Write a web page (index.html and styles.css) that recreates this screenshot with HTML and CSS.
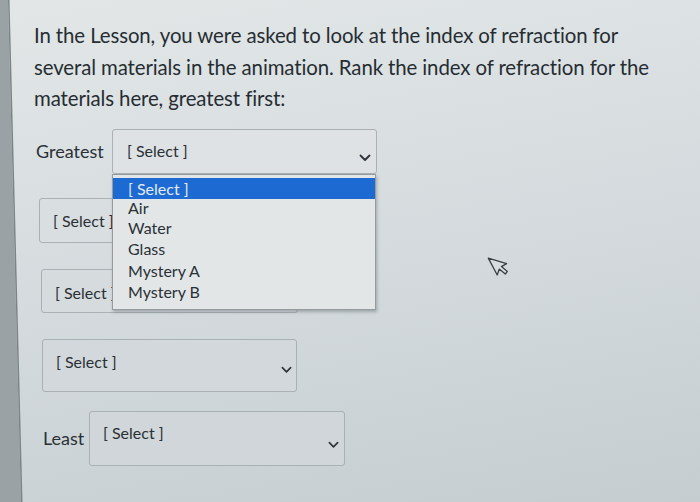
FILE: index.html
```html
<!DOCTYPE html>
<html lang="en">
<head>
<meta charset="utf-8">
<title>Rank the index of refraction</title>
<link rel="stylesheet" href="styles.css">
</head>
<body>
<div class="page">
  <p class="question">In the Lesson, you were asked to look at the index of refraction for several materials in the animation. Rank the index of refraction for the materials here, greatest first:</p>

  <div class="row row-1">
    <span class="label">Greatest</span>
    <div class="select select-1">
      <span class="value">[ Select ]</span>
      <svg class="chev" viewBox="0 0 12 8" width="12" height="8"><path d="M1.5 1.5 L6 6 L10.5 1.5" fill="none" stroke="#2d3439" stroke-width="1.8" stroke-linecap="round" stroke-linejoin="round"/></svg>
      <ul class="menu">
        <li class="opt active">[ Select ]</li>
        <li class="opt first">Air</li>
        <li class="opt">Water</li>
        <li class="opt">Glass</li>
        <li class="opt">Mystery A</li>
        <li class="opt">Mystery B</li>
      </ul>
    </div>
  </div>

  <div class="row row-2">
    <div class="select select-2"><span class="value">[ Select ]</span></div>
  </div>

  <div class="row row-3">
    <div class="select select-3"><span class="value">[ Select ]</span></div>
  </div>

  <div class="row row-4">
    <div class="select select-4">
      <span class="value">[ Select ]</span>
      <svg class="chev" viewBox="0 0 12 8" width="11" height="8"><path d="M1.5 1.5 L6 6 L10.5 1.5" fill="none" stroke="#2d3439" stroke-width="1.8" stroke-linecap="round" stroke-linejoin="round"/></svg>
    </div>
  </div>

  <div class="row row-5">
    <span class="label label-least">Least</span>
    <div class="select select-5">
      <span class="value">[ Select ]</span>
      <svg class="chev" viewBox="0 0 12 8" width="11" height="8"><path d="M1.5 1.5 L6 6 L10.5 1.5" fill="none" stroke="#2d3439" stroke-width="1.8" stroke-linecap="round" stroke-linejoin="round"/></svg>
    </div>
  </div>

  <svg class="cursor" viewBox="0 0 20 28" width="20" height="28">
    <path d="M2 2 L2 21 L6.5 16.8 L9.6 24 L12.6 22.7 L9.6 15.6 L15.6 15.4 Z" fill="#d7dcde" stroke="#3a3f43" stroke-width="1.3" stroke-linejoin="round"/>
  </svg>
</div>
</body>
</html>
```

FILE: styles.css
```css
html, body {
  margin: 0;
  padding: 0;
}

body {
  width: 700px;
  height: 502px;
  overflow: hidden;
  background: linear-gradient(170deg, #e2e6e7 0%, #d9dfe1 35%, #cdd4d7 75%, #c6cdd1 100%);
  font-family: Lato, "Noto Sans", sans-serif;
  color: #2f363b;
  position: relative;
}

body::before {
  content: "";
  position: absolute;
  left: 0;
  top: 0;
  width: 24px;
  height: 502px;
  background: #9aa2a6;
  clip-path: polygon(0 0, 8px 0, 21px 100%, 0 100%);
}

body::after {
  content: "";
  position: absolute;
  left: 0;
  top: 0;
  width: 24px;
  height: 502px;
  background: #7c8488;
  clip-path: polygon(8px 0, 9.5px 0, 22.5px 100%, 21px 100%);
}

.page {
  position: relative;
  height: 502px;
  padding: 20px 0 0 34px;
  box-sizing: border-box;
}

.question {
  margin: 0;
  width: 630px;
  font-size: 20.4px;
  line-height: 31.5px;
  letter-spacing: -0.1px;
  color: #262d32;
}

.row {
  display: flex;
  align-items: center;
}

.row-1 { margin-top: 14px; margin-left: 2px; }
.row-2 { margin-top: 24px; margin-left: 5px; }
.row-3 { margin-top: 26px; margin-left: 7px; }
.row-4 { margin-top: 26px; margin-left: 8px; }
.row-5 { margin-top: 19px; margin-left: 9px; }

.label {
  font-size: 18px;
  color: #2a3136;
  width: 76px;
}

.label-least {
  width: 46px;
}

.select {
  position: relative;
  box-sizing: border-box;
  border: 1px solid #aab1b5;
  border-radius: 3px;
  background: #dee2e4;
  display: flex;
  align-items: flex-start;
  justify-content: space-between;
}

.select .value {
  font-size: 16px;
  line-height: 20px;
  color: #2a3136;
}

.select-1 { width: 265px; height: 45px; padding: 11px 5px 0 14px; }
.select-2 { width: 259px; height: 45px; padding: 12px 10px 0 13px; background: #d9dee0; }
.select-3 { width: 257px; height: 44px; padding: 13px 10px 0 13px; background: #d6dbde; }
.select-4 { width: 255px; height: 53px; padding: 12px 4px 0 13px; background: #d2d8db; }
.select-5 { width: 256px; height: 55px; padding: 11px 5px 0 13px; background: #d0d6d9; }

.chev {
  align-self: center;
}

.select-1 .chev { margin-top: 2px; }
.select-4 .chev { margin-top: -2px; }
.select-5 .chev { margin-top: 2px; }

.menu {
  position: absolute;
  left: -1px;
  top: 44px;
  width: 264px;
  margin: 0;
  padding: 3px 0 6px;
  list-style: none;
  box-sizing: border-box;
  background: #e3e6e7;
  border: 1px solid #959ca0;
  box-shadow: 1px 2px 3px rgba(60, 70, 75, 0.35);
  z-index: 2;
}

.opt {
  font-size: 16px;
  line-height: 21.5px;
  padding-left: 15px;
  color: #2a3136;
}

.opt.active {
  background: #1c6ad2;
  color: #e3ebf7;
  line-height: 21px;
}

.opt.first {
  line-height: 18px;
}

.cursor {
  position: absolute;
  left: 491px;
  top: 251px;
  transform: rotate(-28deg);
}
```
